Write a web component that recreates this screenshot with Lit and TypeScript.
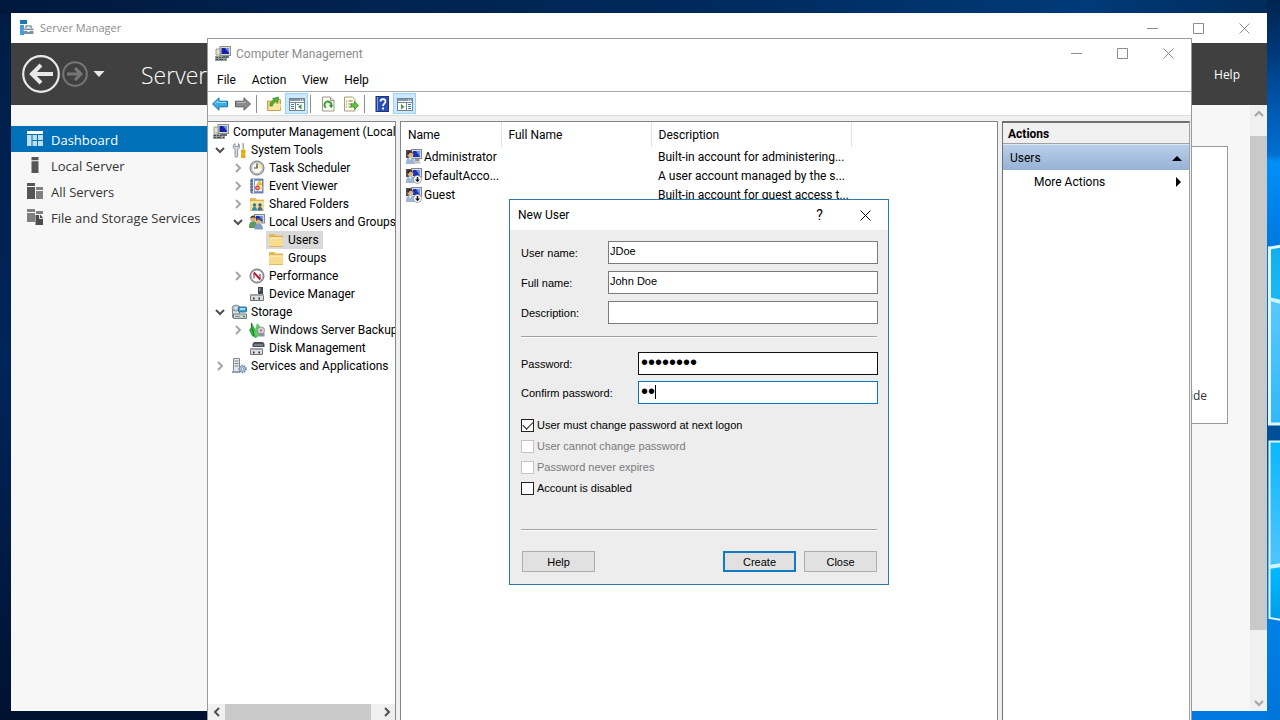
import { LitElement, html, css, svg, nothing } from "lit";
import { customElement, property, state } from "lit/decorators.js";
import { classMap } from "lit/directives/class-map.js";

const computer = svg`
  <rect x="5" y="0.5" width="10.5" height="9" fill="#d9dccb" stroke="#8d9184" stroke-width="1"/>
  <rect x="6.5" y="2" width="7.5" height="6" fill="#1420a8"/>
  <path d="M10 2h4v5z" fill="#6f8cf0"/>
  <path d="M1 3h4v6H1z" fill="#e4e6da" stroke="#85897c" stroke-width=".8"/>
  <path d="M0 10h12v5H0z" fill="#9a9f94"/>
  <path d="M1 11.5h2M4 11.5h2M7 11.5h2M1 13.5h2M4 13.5h4M10 13.5h1" stroke="#3f4a52" stroke-width="1.2"/>
  <path d="M8 10h6v2H8z" fill="#5c6b78"/>`;

const person = svg`
  <rect x="5.5" y=".5" width="10" height="9" fill="#d5dbe2" stroke="#7f8791"/>
  <rect x="7" y="2" width="7" height="6" fill="#1733b4"/>
  <path d="M10 2h4v6z" fill="#6a92ee"/>
  <path d="M0 1h5v8H0z" fill="#4d5157"/>
  <circle cx="4.500" cy="5.500" r="2.800" fill="#e2b886"/>
  <path d="M1 5c-.3-4.500 6-4.500 6 0-1.500-1.500-4-2-4 .8z" fill="#3f2d21"/>
  <path d="M0 15c0-5 1-6.500 4-6.500s5 2 5 6.500z" fill="#9cb6d4"/>
  <path d="M3 8.500l1.200 3 1.600-3z" fill="#fff"/>`;

const folder = svg`
  <path d="M1 3.500V2h5.500l1 1.500H15V14H1z" fill="#e2b95c"/>
  <path d="M1 5h14v9.500H1z" fill="#f8dc8e"/>
  <path d="M1 14.500h14M1 5h14" stroke="#d9ac4b" stroke-width=".8"/>
  <path d="M2 6h12" stroke="#fff3c8"/>`;

const sheet = svg`<path d="M2.500 1h8L14 4.500V15H2.500z" fill="#fbfbf3" stroke="#9b9b88"/><path d="M10.500 1v3.500H14" fill="#e4e4d2" stroke="#9b9b88"/>`;

const panel = svg`
  <rect x=".5" y="2.500" width="15" height="12" fill="#fff" stroke="#6f8494"/>
  <path d="M1 3h14v2H1z" fill="#8498a8"/>
  <path d="M11 4h1M13 4h1" stroke="#fff"/>
  <path d="M1 6.500h14" stroke="#6f8494"/>`;

const icons: Record<string, unknown> = {
  computer,
  folder,
  tools: svg`
    <path d="M4 7.500V14a1.200 1.200 0 0 0 2.600 0V7.500C9 6.500 9 3 7.500 1.500V4.500H4V1.500C1.500 3 1.500 6.500 4 7.500z" fill="#d7dade" stroke="#7c8288" stroke-width=".8"/>
    <path d="M11.500 1h1.500v6h-1.500z" fill="#a4a9ae"/>
    <path d="M10.500 8h3.500v3l-.7 1 .7 1v2.500h-3.500V13l.7-1-.7-1z" fill="#f4b400" stroke="#b77f00" stroke-width=".6"/>`,
  clock: svg`
    <circle cx="8" cy="8" r="7" fill="#c9cdd2" stroke="#6f757b"/>
    <circle cx="8" cy="8" r="5.300" fill="#fffbe6" stroke="#9aa0a6" stroke-width=".6"/>
    <path d="M8 8V2.700A5.300 5.300 0 0 1 13.300 8z" fill="#f6e3a5" opacity=".8"/>
    <path d="M8 3.500V8H5" fill="none" stroke="#3d4248" stroke-width="1.200"/>`,
  event: svg`
    <path d="M2 1h12v14H2z" fill="#7f9dce" stroke="#4c6396" stroke-width=".8"/>
    <path d="M4.500 1v14" stroke="#e9eefa"/>
    <path d="M1 3h3M1 6h3M1 9h3M1 12h3" stroke="#4a5160"/>
    <path d="M6 3h7v10H6z" fill="#f5f8fe"/>
    <path d="M10.500 2.500l2.700 4.500H7.800z" fill="#ffc81f" stroke="#c48b00" stroke-width=".5"/>
    <circle cx="8.500" cy="10" r="2.400" fill="#d6382c"/>
    <path d="M7.500 9l2 2m0-2l-2 2" stroke="#fff" stroke-width=".7"/>
    <path d="M11 8.500h2.500v3H11z" fill="#ffd966"/>`,
  shared: svg`${folder}
    <circle cx="5.500" cy="9" r="1.700" fill="#2f7c93"/><path d="M3 14.500c0-5 5-5 5 0z" fill="#2b8fa6"/>
    <circle cx="11" cy="9" r="1.700" fill="#35607f"/><path d="M8.500 14.500c0-5 5-5 5 0z" fill="#3b6ea8"/>`,
  users: svg`
    <rect x="5.500" y=".5" width="10" height="8.500" fill="#d5dbe2" stroke="#7f8791"/>
    <rect x="7" y="2" width="7" height="5.500" fill="#1733b4"/><path d="M10 2h4v5z" fill="#6a92ee"/>
    <circle cx="4" cy="5" r="2.700" fill="#dcae7b"/><path d="M1.300 4.500c0-4 5.500-4 5.500 0-2-1.500-4-1-5.500 0z" fill="#5b3a22"/>
    <path d="M0 14c0-5 1-6.500 4-6.500S8 9 8 14z" fill="#5c9a5e"/>
    <circle cx="9.500" cy="7.500" r="2.500" fill="#e6bd90"/><path d="M7 7c0-4 5-4 5 0-2-1.500-3.500-1-5 0z" fill="#7a5a2d"/>
    <path d="M5.500 15.500c0-4 1-6 4-6s4.500 2 4.500 6z" fill="#7d9cc6"/>`,
  performance: svg`
    <circle cx="8" cy="8" r="7" fill="#b4b8bd" stroke="#6d7278"/>
    <circle cx="8" cy="8" r="5.300" fill="#fff"/>
    <path d="M5 10.500V6M11 10V6" fill="none" stroke="#c24450" stroke-width="1.300"/>
    <path d="M4.800 4.500l6.500 7" stroke="#b01c2a" stroke-width="1.900"/>`,
  device: svg`
    <path d="M9 1h5v9H9z" fill="#3f444a"/><path d="M10 2h1.500v3H10z" fill="#8d949b"/>
    <path d="M1.500 8.500h13v6h-13z" fill="#dcdfe2" stroke="#6e747a"/>
    <path d="M1 8h14v2H1z" fill="#9da3a9"/><path d="M4 11.500h1.500v2H4zM9.500 11.500H11v2H9.500z" fill="#26292c"/>`,
  storage: svg`
    <path d="M1.500 3.500h7v10h-7z" fill="#dadee2" stroke="#7f868d"/>
    <ellipse cx="5" cy="4" rx="4" ry="3" fill="#b9c3cc" stroke="#7b858e" stroke-width=".8"/><circle cx="5" cy="4" r="1.100" fill="#f6f8fa"/>
    <rect x="7.500" y="3" width="8" height="5" rx=".8" fill="#3ba0d8" stroke="#30708f"/><path d="M9 5h5" stroke="#c8f0ff" stroke-width="1.500"/>
    <path d="M2.500 10h13v4.500h-13z" fill="#ccd1d5" stroke="#767d84"/><path d="M12 12.500h2" stroke="#36a13a" stroke-width="1.500"/><path d="M4 12.500h5" stroke="#858c93"/>`,
  backup: svg`
    <path d="M2.500 0v4.500L0 8l3 6 4 2V9L5.500 6z" fill="#35b13f"/><path d="M8 1l3 3-1 3v7l-2.500 2L5 11z" fill="#5fc96a"/>
    <path d="M2.500 1v5l2 4v4" fill="none" stroke="#1f7c2b"/>
    <circle cx="12" cy="8.500" r="3.600" fill="#cfd4d8" stroke="#7c8389" stroke-width=".8"/><circle cx="12" cy="8.500" r="1" fill="#c94b3f"/>
    <path d="M10 11h5.500v3.500H10z" fill="#8b9299"/>`,
  disk: svg`
    <path d="M5 2h9l1.500 2v3H3.500V4z" fill="#4b5056"/><path d="M5 5h9" stroke="#a8aeb4"/>
    <path d="M1.500 8.500h12v6h-12z" fill="#dcdfe2" stroke="#6e747a"/><path d="M1 8h13v2H1z" fill="#9da3a9"/>
    <path d="M4 11.500h1.500v2H4zM9.500 11.500H11v2H9.500z" fill="#26292c"/>`,
  services: svg`
    <path d="M2.500.5h6v13h-6z" fill="#e4e7ea" stroke="#828990"/><path d="M3.500 3h4M3.500 5.500h4M3.500 8h4" stroke="#7c858e"/>
    <path d="M1 13h8v2H1z" fill="#9aa1a8"/>
    <circle cx="11.500" cy="11" r="3.400" fill="#b8cbe0" stroke="#5f82a8" stroke-width="1.600" stroke-dasharray="1.400 1"/><circle cx="11.500" cy="11" r="1.300" fill="#fff" stroke="#5f82a8" stroke-width=".7"/>`,
  person: svg`${person}<path d="M9 10h4.500v2.500H9z" fill="#8d959c"/><path d="M7.500 13h7v1.500h-7z" fill="#b7bdc2"/>`,
  personOff: svg`${person}<circle cx="11.500" cy="11.500" r="4" fill="#fff" stroke="#8b8f94" stroke-width=".8"/><path d="M11.500 9v3.500" stroke="#111" stroke-width="1.500"/><path d="M9 11.500h5l-2.500 2.700z" fill="#111"/>`,
  back: svg`<path d="M.5 8L7 1.800v3.400h8.500v5.600H7v3.400z" fill="#38aee6" stroke="#1b6ea8"/><path d="M3 7.500l3-2.700V6.500h8" fill="none" stroke="#9fe0fa"/>`,
  forward: svg`<path d="M15.500 8L9 1.800v3.400H.5v5.600H9v3.400z" fill="#8c8c8c" stroke="#5f5f5f"/><path d="M2 6.500h8V5" fill="none" stroke="#bdbdbd"/>`,
  up: svg`<path d="M1.500 5h5l1-1.500h7v11h-13z" fill="#efd078" stroke="#b8923c" stroke-width=".8"/><path d="M2 14l3-6h10l-1 6z" fill="#fbe7a4"/>
    <path d="M4 10c0-3 1-5 4-6L6.500 2.500 12.500 1l-.8 6L10 5.500c-2 .8-3 2-3.500 4.500z" fill="#4cb532" stroke="#2d7d1c" stroke-width=".6"/>`,
  treePane: svg`${panel}<path d="M6.500 7v7.500" stroke="#6f8494"/><path d="M2 8.500h3M2 10.500h3M2 12.500h3M8 8.500h2" stroke="#4479a8"/><path d="M12.500 8v5.500L9 10.700z" fill="#3d9e34"/>`,
  actionPane: svg`${panel}<path d="M9.500 7v7.500" stroke="#6f8494"/><path d="M11 8.500h3M11 10.500h3M11 12.500h3" stroke="#4479a8"/><path d="M4 8v5.500l3.500-2.800z" fill="#3d9e34"/>`,
  refresh: svg`${sheet}<path d="M6 11.800A3.400 3.400 0 1 1 11.300 9.500" fill="none" stroke="#36a033" stroke-width="1.900"/><path d="M8.700 9h4.600l-2 3.600z" fill="#36a033"/>`,
  exportList: svg`<path d="M1.500 1h8L12 3.500V15H1.500z" fill="#fbfbe9" stroke="#a7a078"/><path d="M3 5h1M5.500 5h4M3 8h1M5.500 8h3M3 11h1M5.500 11h3" stroke="#7c7a58"/>
    <path d="M8 7.800h3.500V5.500L15.700 9.500l-4.200 4V11H8z" fill="#64c43f" stroke="#378a22" stroke-width=".7"/>`,
  help: svg`<rect x="2" y=".5" width="12.500" height="15" fill="#2b4fb0" stroke="#1c347c"/><path d="M3.500 1v14" stroke="#7d9be4"/>
    <path d="M6.500 5.500c0-3.300 5-3.300 5 0 0 2-2.500 2.200-2.500 4.500" fill="none" stroke="#fff" stroke-width="1.700"/><path d="M8.100 11.500h1.900v1.900H8.100z" fill="#fff"/>`,
  serverManager: svg`<path d="M1 0h7v4H1z" fill="#1879b8"/><path d="M1 5h4v10H1z" fill="#3f9fd6"/>
    <path d="M4.500 8.500h10V14h-10z" fill="#78909f"/><path d="M7 8V6h5v2" fill="none" stroke="#5d7482" stroke-width="1.200"/><path d="M4.500 10.500h10" stroke="#fff" stroke-width=".9"/><path d="M8.500 10h2v2h-2z" fill="#fff"/>`,
  dashboard: svg`<path d="M0 0h16v3H0z" fill="#fff"/><path d="M0 4h4.500v11H0zM5.500 4H10v5H5.500zM11 4h5v5h-5zM5.500 10H10v5H5.500zM11 10h5v5h-5z" fill="#bfe0f4"/>`,
  localServer: svg`<path d="M4.500 0h7v3.200h-7zM4.500 4.200h7V16h-7z" fill="#565656"/>`,
  allServers: svg`<path d="M0 0h8v3H0zM0 4h8v12H0z" fill="#565656"/><path d="M9 4h7v3H9zM9 8h7v8H9z" fill="#808080"/>`,
  fileServices: svg`<path d="M0 0h8v3H0zM0 4h8v9H0zM9 2h7v3H9z" fill="#808080"/><path d="M8.500 6h5L16 8.500V16H8.500z" fill="#4c4c4c"/><path d="M12.500 6v3.500H16" fill="none" stroke="#f7f7f7" stroke-width=".9"/>`,
};

@customElement("ui-icon")
class UiIcon extends LitElement {
  @property() name = "";
  static styles = css`
    :host { display: inline-flex; flex: none; width: 16px; height: 16px; }
    svg { width: 16px; height: 16px; }
  `;
  render() {
    return html`<svg viewBox="0 0 16 16" aria-hidden="true">${icons[this.name]}</svg>`;
  }
}

interface TreeRow { label: string; icon: string; level: number; open?: boolean; leaf?: boolean; }

const tree: TreeRow[] = [
  { label: "Computer Management (Local", icon: "computer", level: 0, leaf: true },
  { label: "System Tools", icon: "tools", level: 1, open: true },
  { label: "Task Scheduler", icon: "clock", level: 2 },
  { label: "Event Viewer", icon: "event", level: 2 },
  { label: "Shared Folders", icon: "shared", level: 2 },
  { label: "Local Users and Groups", icon: "users", level: 2, open: true },
  { label: "Users", icon: "folder", level: 3, leaf: true },
  { label: "Groups", icon: "folder", level: 3, leaf: true },
  { label: "Performance", icon: "performance", level: 2 },
  { label: "Device Manager", icon: "device", level: 2, leaf: true },
  { label: "Storage", icon: "storage", level: 1, open: true },
  { label: "Windows Server Backup", icon: "backup", level: 2 },
  { label: "Disk Management", icon: "disk", level: 2, leaf: true },
  { label: "Services and Applications", icon: "services", level: 1 },
];

const accounts = [
  { name: "Administrator", icon: "person", text: "Built-in account for administering..." },
  { name: "DefaultAcco...", icon: "personOff", text: "A user account managed by the s..." },
  { name: "Guest", icon: "personOff", text: "Built-in account for guest access t..." },
];

const navigation = [
  { label: "Dashboard", icon: "dashboard" },
  { label: "Local Server", icon: "localServer" },
  { label: "All Servers", icon: "allServers" },
  { label: "File and Storage Services", icon: "fileServices" },
];

const windowButtons = () => html`
  <div class="controls">
    <button aria-label="Minimize"><svg viewBox="0 0 11 11"><path d="M0 5.500h11"/></svg></button>
    <button aria-label="Maximize"><svg viewBox="0 0 11 11"><path d="M.5.500h10v10H.5z"/></svg></button>
    <button aria-label="Close"><svg viewBox="0 0 11 11"><path d="M.5.500l10 10m0-10l-10 10"/></svg></button>
  </div>`;

const chevron = (d: string, cls = "") => html`<svg class="chevron ${cls}" viewBox="0 0 10 10" aria-hidden="true"><path d=${d}/></svg>`;
const RIGHT = "M3 1l4 4-4 4";
const DOWN = "M1 3l4 4 4-4";
const LEFT = "M7 1L3 5l4 4";
const UP = "M1 7l4-4 4 4";

@customElement("app-root")
class AppRoot extends LitElement {
  @state() selected = "Users";

  static styles = css`
    :host {
      display: block;
      position: relative;
      height: 100vh;
      overflow: hidden;
      color: #000;
      font: 12px/18px Roboto, "Open Sans", sans-serif;
      background:
        linear-gradient(90deg, #00183c, #00204c 20%, #002a5c 55%, #003a78 85%, #002a58) top / 100% 14px no-repeat,
        linear-gradient(90deg, #001230 16%, #0078e0 93%) bottom / 100% 12px no-repeat,
        linear-gradient(#001c44, #00255a 50%, #001230);
    }
    * { box-sizing: border-box; }
    button, input { font: inherit; color: inherit; margin: 0; border-radius: 0; }
    button { padding: 0; border: 0; background: none; }
    a { color: inherit; text-decoration: none; }
    ul { list-style: none; margin: 0; padding: 0; }
    h1, h2 { margin: 0; font: inherit; }

    .glow { position: absolute; top: 0; right: 0; width: 20px; height: 100%; }
    .window { position: absolute; display: flex; flex-direction: column; background: #fff; }
    .titlebar { display: flex; align-items: center; gap: 5px; color: #8c8c8c; }
    .titlebar h1 { flex: 1; }
    .controls { display: flex; }
    .controls button { width: 46px; height: 28px; display: flex; align-items: center; justify-content: center; }
    .controls svg { width: 11px; height: 11px; fill: none; stroke: #8c8c8c; }
    .chevron { width: 10px; height: 10px; fill: none; stroke: #505050; stroke-width: 2; }
    .chevron.light { stroke: #a6a6a6; }

    .server { inset: 13px 13px 9px 11px; background: #f7f7f7; font-family: "Open Sans", "Noto Sans", sans-serif; }
    .server > .titlebar { height: 30px; padding-left: 8px; background: #fff; font-size: 11px; }
    .banner { height: 62px; display: flex; align-items: center; background: #404040; color: #fff; padding: 0 27px 0 11px; }
    .banner svg { width: 84px; height: 40px; margin-right: 35px; }
    .banner h2, .banner a { padding-top: 2px; }
    .banner h2 { flex: 1; font-size: 23px; font-weight: 300; line-height: 32px; }
    .server-body { flex: 1; display: flex; min-height: 0; }
    .nav { width: 196px; padding-top: 21px; font-size: 13px; color: #333; }
    .nav a { display: flex; align-items: center; gap: 8px; height: 26px; padding-left: 16px; white-space: nowrap; }
    .nav span { padding-top: 2px; }
    .nav a.current { background: #0070b8; color: #fff; }
    .main { flex: 1; padding: 41px 22px 0 0; }
    .tile { height: 278px; border: 1px solid #999; background: #fff; display: flex; align-items: flex-end; justify-content: flex-end; padding: 0 20px 18px 0; color: #333; }
    .scroll-y { width: 17px; display: flex; flex-direction: column; align-items: center; background: #f0f0f0; }
    .scroll-y .end { flex: none; height: 17px; display: flex; align-items: center; }
    .scroll-y .thumb { flex: 494; width: 17px; background: #c9c9c9; }
    .scroll-y .gap { flex: 14; }
    .scroll-y .gap.after { flex: 64; }

    .mmc { inset: 38px 88px 0 207px; border: 1px solid #999; border-bottom: 0; }
    .mmc > .titlebar { height: 29px; padding-left: 7px; }
    .menu { display: flex; align-items: center; gap: 16px; height: 24px; padding-left: 9px; border-bottom: 1px solid #a9a9a9; }
    .toolbar { display: flex; align-items: center; height: 23px; }
    .toolbar button { width: 23px; height: 21px; display: flex; align-items: center; justify-content: center; border: 1px solid transparent; }
    .toolbar button.on { background: #cce8ff; border-color: #99d1ff; }
    .toolbar .sep { width: 1px; height: 18px; margin: 0 5px 0 2px; background: #8d8d8d; }
    .panes { flex: 1; min-height: 0; display: grid; grid-template-columns: 188px minmax(0, 1fr) 188px; gap: 4px; padding: 5px 1px 0 0; background: #f0f0f0; border-top: 1px solid #dcdcdc; }
    .pane { background: #fff; border: 1px solid #828790; border-bottom: 0; overflow: hidden; display: flex; flex-direction: column; min-width: 0; }

    .tree { border-left: 0; }
    .tree ul { flex: 1; padding: 1px 0 0 3px; white-space: nowrap; overflow: hidden; }
    .tree li { display: flex; align-items: center; height: 18px; }
    .level-2 { margin-left: 18px; }
    .level-3 { margin-left: 37px; }
    .twist { flex: none; width: 18px; height: 18px; display: flex; align-items: center; justify-content: center; }
    .node { display: flex; align-items: center; gap: 4px; height: 18px; padding: 0 4px 0 2px; }
    .node.selected { background: #d9d9d9; }
    .scroll-x { flex: none; display: flex; align-items: center; height: 16px; background: #f0f0f0; }
    .scroll-x .end { width: 17px; display: flex; justify-content: center; }
    .scroll-x .thumb { flex: 146; height: 16px; background: #c9c9c9; }
    .scroll-x .gap { flex: 7; }

    table { border-collapse: collapse; table-layout: fixed; width: 450px; }
    th, td { text-align: left; font-weight: 400; padding: 0 0 0 7px; white-space: nowrap; }
    th { height: 25px; border-right: 1px solid #e3e3e3; }
    td { height: 19px; }
    td:first-child { padding-left: 5px; }
    .account { display: flex; align-items: center; gap: 2px; height: 19px; }
    .c-name { width: 100px; }
    .c-wide { width: 150px; }
    .c-text { width: 200px; }

    .actions { border-width: 2px 1px 0 1px; border-color: #707070 #a0a0a0 #707070 #707070; }
    .actions h2 { height: 21px; padding: 1px 5px 0; line-height: 20px; font-weight: 700; background: #f0f0f0; border-bottom: 1px solid #a0a0a0; }
    .actions button { display: flex; align-items: center; justify-content: space-between; text-align: left; height: 24px; padding: 0 7px; }
    .actions .group { height: 26px; background: linear-gradient(#b9cfea, #97b2d6); border-top: 1px solid #dbe6f3; }
    .actions .more { padding-left: 31px; }
    .actions svg { width: 10px; height: 12px; }

    .dialog { position: absolute; left: 509px; top: 199px; width: 380px; border: 1px solid #2a7ba6; background: #ededed; }
    .dialog > .titlebar { height: 30px; padding-left: 8px; background: #fff; color: #000; }
    .dialog .controls svg { stroke: #000; }
    .dialog .controls .query { font-size: 14px; width: 45px; }
    form { padding: 11px 10px 12px 11px; font: 11px/16px "Liberation Sans", Arial, sans-serif; }
    .fields { display: grid; gap: 7px; }
    .fields.tight { gap: 6px; }
    .row { display: grid; grid-template-columns: 87px 1fr; align-items: center; }
    .row.secret { grid-template-columns: 117px 1fr; }
    .row input { width: 100%; height: 23px; padding: 0 1px 3px; border: 1px solid #7a7a7a; background: #fff; outline: 0; }
    .row.secret input { border-color: #111; padding: 0 2px 2px; font-size: 20px; }
    .row.secret .focused { border-color: #0a78b8; }
    .entry { position: relative; display: flex; }
    .caret { position: absolute; left: 17px; top: 4px; width: 1px; height: 14px; background: #000; }
    hr { height: 2px; border: 0; border-top: 1px solid #a0a0a0; background: #fff; margin: 12px 1px 14px 0; }
    .checks { display: grid; gap: 5px; padding-top: 13px; }
    .checks label { display: flex; align-items: center; gap: 3px; height: 16px; }
    .checks input { appearance: none; width: 13px; height: 13px; border: 1px solid #222; background: #fff; display: grid; place-items: center; }
    .checks input:checked::before { content: ""; width: 9px; height: 5px; margin-bottom: 3px; border: solid #222; border-width: 0 0 1px 1px; transform: rotate(-45deg); }
    .checks .off { color: #7a7a7a; }
    .checks .off input { border-color: #c4c4c4; }
    .line-low { margin: 33px 1px 20px 0; }
    .buttons { display: flex; gap: 8px; padding: 0 1px; }
    .buttons button { width: 73px; height: 21px; border: 1px solid #adadad; background: #e1e1e1; }
    .buttons .first { margin-right: auto; }
    .buttons .primary { border: 2px solid #1279c4; }
  `;

  private desktopLight() {
    return html`<svg class="glow" viewBox="0 0 20 720" preserveAspectRatio="none" aria-hidden="true">
      <defs>
        <linearGradient id="sky" x1="0" y1="0" x2="0" y2="1">
          <stop offset="0" stop-color="#002450"/><stop offset=".06" stop-color="#003470"/><stop offset=".15" stop-color="#0058b0"/>
          <stop offset=".215" stop-color="#0070d0"/><stop offset=".225" stop-color="#0090f8"/><stop offset=".3" stop-color="#0080ea"/>
          <stop offset=".58" stop-color="#005098"/><stop offset=".62" stop-color="#005098"/><stop offset=".87" stop-color="#0080e6"/><stop offset="1" stop-color="#0074d8"/>
        </linearGradient>
        <linearGradient id="pane" x1="0" y1="0" x2="0" y2="1">
          <stop offset="0" stop-color="#12aef0"/><stop offset=".29" stop-color="#18b8f8"/><stop offset=".33" stop-color="#58c8ff"/><stop offset="1" stop-color="#30b8fa"/>
        </linearGradient>
        <linearGradient id="lower" x1="0" y1="0" x2="0" y2="1">
          <stop offset="0" stop-color="#08b8ff"/><stop offset=".67" stop-color="#50c4fc"/><stop offset=".72" stop-color="#00b8ff"/><stop offset="1" stop-color="#009ce8"/>
        </linearGradient>
      </defs>
      <rect x="7" width="13" height="720" fill="url(#sky)"/>
      <path d="M9.500 248L22 246V424H9.500z" fill="url(#pane)" stroke="#dff8ff" stroke-width="3"/>
      <path d="M9 299l12 3" stroke="#d0f4ff" stroke-width="4"/>
      <path d="M9.500 441.500H22V620L9.500 618z" fill="url(#lower)" stroke="#dff8ff" stroke-width="2"/>
      <path d="M9 567l12-2" stroke="#d0f4ff" stroke-width="4"/>
    </svg>`;
  }

  private serverManager() {
    return html`<section class="window server">
      <header class="titlebar"><ui-icon name="serverManager"></ui-icon><h1>Server Manager</h1>${windowButtons()}</header>
      <div class="banner">
        <svg viewBox="0 0 84 40" fill="none" aria-hidden="true">
          <circle cx="19" cy="20" r="17.800" stroke="#e8e8e8" stroke-width="2.200"/>
          <path d="M31 20H10m9-9l-9 9 9 9" stroke="#e8e8e8" stroke-width="4"/>
          <circle cx="53" cy="20" r="11.800" stroke="#777" stroke-width="2"/>
          <path d="M45 20h14m-6-6l6 6-6 6" stroke="#777" stroke-width="3"/>
          <path d="M71.500 17h11l-5.500 6z" fill="#e8e8e8"/>
        </svg>
        <h2>Server</h2>
        <a href="#help">Help</a>
      </div>
      <div class="server-body">
        <nav class="nav">
          ${navigation.map((item, i) => html`<a href="#" class=${classMap({ current: i === 0 })}><ui-icon name=${item.icon}></ui-icon><span>${item.label}</span></a>`)}
        </nav>
        <div class="main"><div class="tile"><a href="#hide">Hide</a></div></div>
        <div class="scroll-y">
          <span class="end">${chevron(UP, "light")}</span><span class="gap"></span><span class="thumb"></span><span class="gap after"></span><span class="end">${chevron(DOWN, "light")}</span>
        </div>
      </div>
    </section>`;
  }

  private management() {
    const tool = (name: string, label: string, on = false) =>
      html`<button class=${classMap({ on })} aria-label=${label}><ui-icon name=${name}></ui-icon></button>`;
    const sep = html`<span class="sep"></span>`;
    return html`<section class="window mmc">
      <header class="titlebar"><ui-icon name="computer"></ui-icon><h1>Computer Management</h1>${windowButtons()}</header>
      <nav class="menu">${["File", "Action", "View", "Help"].map((m) => html`<button>${m}</button>`)}</nav>
      <div class="toolbar">
        ${tool("back", "Back")}${tool("forward", "Forward")}${sep}
        ${tool("up", "Up one level")}${tool("treePane", "Show or hide console tree", true)}${sep}
        ${tool("refresh", "Refresh")}${tool("exportList", "Export list")}${sep}
        ${tool("help", "Help")}${tool("actionPane", "Show or hide action pane", true)}
      </div>
      <div class="panes">
        <div class="pane tree">
          <ul>
            ${tree.map((row) => html`<li class="level-${row.level}">
              ${row.level ? html`<span class="twist">${row.leaf ? nothing : chevron(row.open ? DOWN : RIGHT, row.open ? "" : "light")}</span>` : nothing}
              <span class=${classMap({ node: true, selected: row.label === this.selected })} @click=${() => (this.selected = row.label)}>
                <ui-icon name=${row.icon}></ui-icon>${row.label}</span>
            </li>`)}
          </ul>
          <div class="scroll-x">
            <span class="end">${chevron(LEFT)}</span><span class="thumb"></span><span class="gap"></span><span class="end">${chevron(RIGHT)}</span>
          </div>
        </div>
        <div class="pane">
          <table>
            <colgroup><col class="c-name"><col class="c-wide"><col class="c-text"></colgroup>
            <thead><tr><th>Name</th><th>Full Name</th><th>Description</th></tr></thead>
            <tbody>
              ${accounts.map((a) => html`<tr><td><span class="account"><ui-icon name=${a.icon}></ui-icon>${a.name}</span></td><td></td><td>${a.text}</td></tr>`)}
            </tbody>
          </table>
        </div>
        <aside class="pane actions">
          <h2>Actions</h2>
          <button class="group">Users<svg viewBox="0 0 10 12" aria-hidden="true"><path d="M0 9l5-5 5 5z"/></svg></button>
          <button class="more">More Actions<svg viewBox="0 0 10 12" aria-hidden="true"><path d="M4 1l5 5-5 5z"/></svg></button>
        </aside>
      </div>
    </section>`;
  }

  private newUser() {
    return html`<section class="dialog" role="dialog" aria-label="New User">
      <header class="titlebar">
        <h1>New User</h1>
        <div class="controls">
          <button class="query">?</button>
          <button aria-label="Close"><svg viewBox="0 0 11 11"><path d="M.5.500l10 10m0-10l-10 10"/></svg></button>
        </div>
      </header>
      <form @submit=${(e: Event) => e.preventDefault()}>
        <div class="fields">
          <div class="row"><label for="user">User name:</label><input id="user" value="JDoe"></div>
          <div class="row"><label for="full">Full name:</label><input id="full" value="John Doe"></div>
          <div class="row"><label for="desc">Description:</label><input id="desc"></div>
        </div>
        <hr>
        <div class="fields tight">
          <div class="row secret"><label for="pass">Password:</label><input id="pass" type="password" value="password"></div>
          <div class="row secret"><label for="again">Confirm password:</label>
            <span class="entry"><input id="again" class="focused" type="password" value="pa"><span class="caret"></span></span></div>
        </div>
        <div class="checks">
          <label><input type="checkbox" checked>User must change password at next logon</label>
          <label class="off"><input type="checkbox" disabled>User cannot change password</label>
          <label class="off"><input type="checkbox" disabled>Password never expires</label>
          <label><input type="checkbox">Account is disabled</label>
        </div>
        <hr class="line-low">
        <div class="buttons">
          <button class="first" type="button">Help</button>
          <button class="primary">Create</button>
          <button type="button">Close</button>
        </div>
      </form>
    </section>`;
  }

  render() {
    return html`${this.desktopLight()}${this.serverManager()}${this.management()}${this.newUser()}`;
  }
}
